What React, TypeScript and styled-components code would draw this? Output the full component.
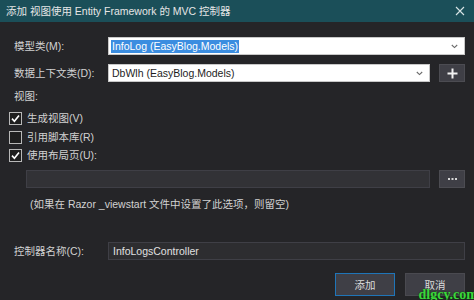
import React from "react";
import styled, { createGlobalStyle } from "styled-components";

const Global = createGlobalStyle`
  html, body { margin: 0; padding: 0; background: #252528; }
  body { font-family: "Liberation Sans", "Noto Sans CJK SC", sans-serif; }
  * { box-sizing: border-box; }
`;

const Window = styled.div`
  position: relative;
  width: 474px;
  height: 300px;
  overflow: hidden;
  background: #252528;
  color: #d4d4d4;
  font-size: 10.5px;
  line-height: 14px;
  font-family: "Liberation Sans", "Noto Sans CJK SC", sans-serif;
`;

const TitleBar = styled.div`
  height: 22px;
  background: #1b4f59;
  display: flex;
  align-items: center;
  justify-content: space-between;
  padding: 0 9px 0 6px;
  color: #e6e6e6;
`;

const Body = styled.div`
  padding: 15px 9px 0 14px;
  display: flex;
  flex-direction: column;
`;

const FieldRow = styled.div<{ $mt?: number }>`
  display: flex;
  align-items: center;
  height: 18px;
  margin-top: ${(p) => p.$mt ?? 0}px;
`;

const Label = styled.div`
  width: 94px;
  flex: none;
  white-space: nowrap;
  color: #d2d2d2;
`;

const Combo = styled.div`
  flex: 1;
  height: 18px;
  background: #ffffff;
  border: 1px solid #c8c8c8;
  display: flex;
  align-items: center;
  justify-content: space-between;
  padding: 0 6px 0 2px;
  color: #1e1e1e;
`;

const Selected = styled.span`
  background: #3b8de0;
  color: #fff;
  padding: 0 1px;
  line-height: 13px;
`;

const Plain = styled.span`
  padding: 0 1px;
`;

const SquareButton = styled.div`
  width: 26px;
  height: 18px;
  margin-left: 9px;
  flex: none;
  background: #3f3f46;
  border: 1px solid #4c4c52;
  display: flex;
  align-items: center;
  justify-content: center;
  color: #f0f0f0;
`;

const SectionLabel = styled.div`
  margin-top: 7px;
  height: 14px;
  color: #d2d2d2;
`;

const CheckRow = styled.div<{ $mt?: number }>`
  display: flex;
  align-items: center;
  height: 14px;
  margin-top: ${(p) => p.$mt ?? 0}px;
  margin-left: -5px;
  gap: 5px;
  color: #d2d2d2;
`;

const Box = styled.div`
  width: 13px;
  height: 13px;
  border: 1px solid #b8b8b8;
  background: #1e1e1e;
  display: flex;
  align-items: center;
  justify-content: center;
`;

const TextField = styled.div<{ $dim?: boolean }>`
  flex: 1;
  height: 18px;
  background: ${(p) => (p.$dim ? "#323236" : "#2d2d30")};
  border: 1px solid #3f3f46;
  display: flex;
  align-items: center;
  padding: 0 4px;
  color: #e0e0e0;
`;

const LayoutRow = styled.div`
  display: flex;
  align-items: center;
  height: 18px;
  margin-top: 8px;
  margin-left: 12px;
`;

const Hint = styled.div`
  margin-top: 9px;
  margin-left: 16px;
  height: 14px;
  color: #d2d2d2;
  white-space: nowrap;
`;

const Footer = styled.div`
  display: flex;
  justify-content: flex-end;
  gap: 10px;
  margin-top: 13px;
`;

const DialogButton = styled.div<{ $primary?: boolean }>`
  width: 60px;
  height: 23px;
  background: #3f3f46;
  border: 1px solid ${(p) => (p.$primary ? "#1f75b8" : "#4a4a50")};
  display: flex;
  align-items: center;
  justify-content: center;
  color: #dcdcdc;
`;

const Watermark = styled.div`
  position: absolute;
  right: -4px;
  bottom: -2px;
  font-family: "Liberation Serif", serif;
  font-weight: bold;
  font-size: 14px;
  line-height: 14px;
  color: #3ad83a;
  text-shadow: 0 0 2px #0a3a0a;
`;

const Chevron = () => (
  <svg width="7" height="5" viewBox="0 0 7 5">
    <path d="M0.8 1 L3.5 3.6 L6.2 1" fill="none" stroke="#6a6a6a" strokeWidth="1.1" />
  </svg>
);

const Check = () => (
  <svg width="11" height="11" viewBox="0 0 11 11">
    <path d="M2 5.6 L4.4 8.2 L9 2.4" fill="none" stroke="#ffffff" strokeWidth="1.6" />
  </svg>
);

const Close = () => (
  <svg width="10" height="10" viewBox="0 0 10 10">
    <path d="M1 1 L9 9 M9 1 L1 9" stroke="#d8e4e6" strokeWidth="1.1" />
  </svg>
);

export default function App() {
  return (
    <>
      <Global />
      <Window>
        <TitleBar>
          <span>添加 视图使用 Entity Framework 的 MVC 控制器</span>
          <Close />
        </TitleBar>
        <Body>
          <FieldRow>
            <Label>模型类(M):</Label>
            <Combo>
              <Selected>InfoLog (EasyBlog.Models)</Selected>
              <Chevron />
            </Combo>
          </FieldRow>
          <FieldRow $mt={9}>
            <Label>数据上下文类(D):</Label>
            <Combo>
              <Plain>DbWlh (EasyBlog.Models)</Plain>
              <Chevron />
            </Combo>
            <SquareButton>
              <svg width="11" height="11" viewBox="0 0 11 11">
                <path d="M5.5 0.5 V10.5 M0.5 5.5 H10.5" stroke="#f2f2f2" strokeWidth="2" />
              </svg>
            </SquareButton>
          </FieldRow>
          <SectionLabel>视图:</SectionLabel>
          <CheckRow $mt={8}>
            <Box><Check /></Box>
            <span>生成视图(V)</span>
          </CheckRow>
          <CheckRow $mt={5}>
            <Box />
            <span>引用脚本库(R)</span>
          </CheckRow>
          <CheckRow $mt={4}>
            <Box><Check /></Box>
            <span>使用布局页(U):</span>
          </CheckRow>
          <LayoutRow>
            <TextField $dim />
            <SquareButton>
              <svg width="9" height="3" viewBox="0 0 9 3">
                <rect x="0" y="0" width="2" height="2" fill="#d8d8d8" />
                <rect x="3.5" y="0" width="2" height="2" fill="#d8d8d8" />
                <rect x="7" y="0" width="2" height="2" fill="#d8d8d8" />
              </svg>
            </SquareButton>
          </LayoutRow>
          <Hint>(如果在 Razor _viewstart 文件中设置了此选项，则留空)</Hint>
          <FieldRow $mt={31}>
            <Label>控制器名称(C):</Label>
            <TextField>InfoLogsController</TextField>
          </FieldRow>
          <Footer>
            <DialogButton $primary>添加</DialogButton>
            <DialogButton>取消</DialogButton>
          </Footer>
        </Body>
        <Watermark>dlgcy.com</Watermark>
      </Window>
    </>
  );
}
